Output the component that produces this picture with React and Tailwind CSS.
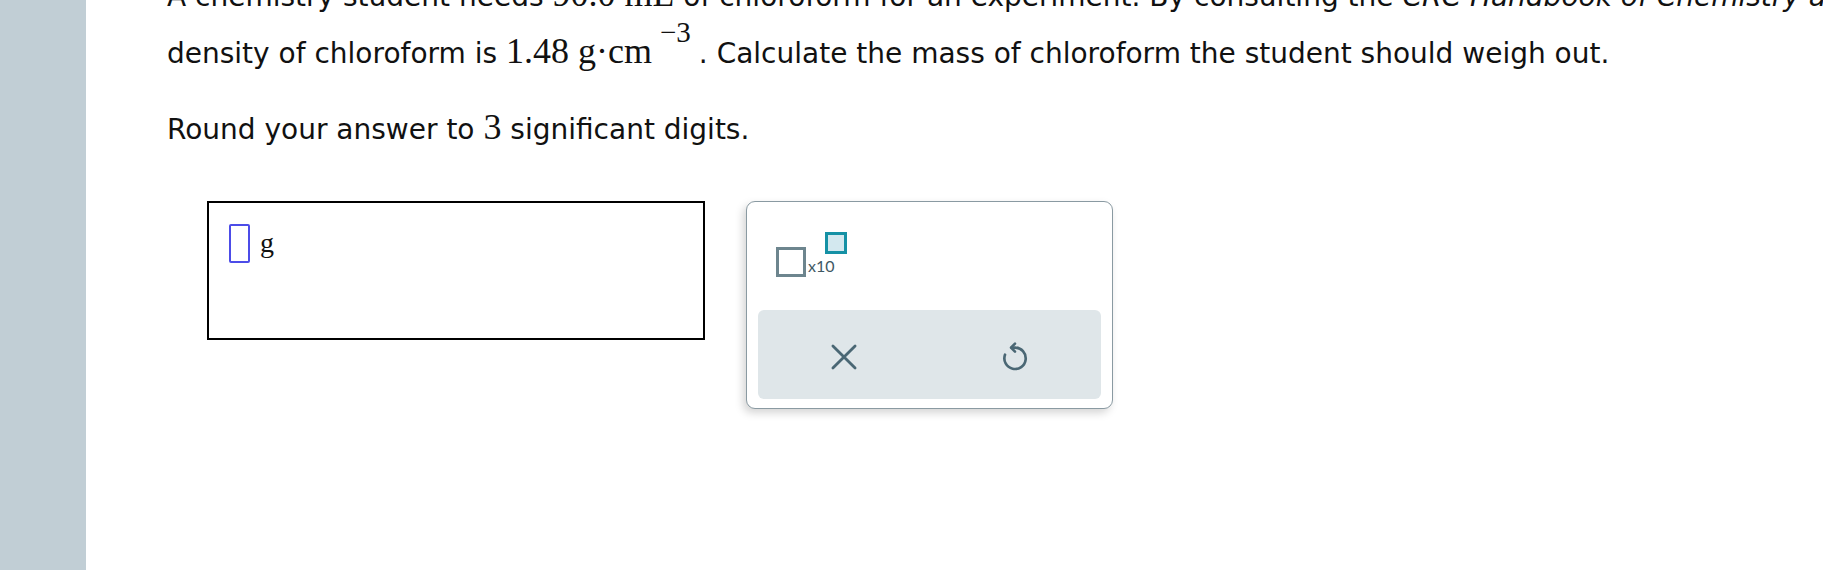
import React from "react";

const sans = { fontFamily: '"DejaVu Sans", Verdana, sans-serif' };
const serif = { fontFamily: '"Liberation Serif", "Times New Roman", serif' };

function Line({ children, className = "" }) {
  return (
    <div className={"h-[57px] leading-[57px] whitespace-nowrap " + className}>
      {children}
    </div>
  );
}

export default function App() {
  return (
    <div className="flex h-[570px] w-full overflow-hidden bg-white" style={sans}>
      <div className="w-[86px] shrink-0 bg-[#c1ced5]" />
      <div className="flex-1 min-w-0 overflow-hidden pl-[81px]">
        <div className="-mt-[32px] text-[28px] text-[#111]">
          <Line>
            A chemistry student needs <span className="text-[36px] leading-none" style={serif}>90.0 mL</span> of chloroform for an experiment. By consulting the <i>CRC Handbook of Chemistry and Physics</i>, the student discovers that the
          </Line>
          <Line>
            density of chloroform is{" "}
            <span className="text-[36px] leading-none" style={serif}>1.48 g·cm</span>
            <span className="relative -top-[21px] ml-[8px] mr-[8px] text-[29px] leading-none" style={serif}>−3</span>
            . Calculate the mass of chloroform the student should weigh out.
          </Line>
          <Line className="mt-[19px]">
            Round your answer to <span className="text-[36px] leading-none" style={serif}>3</span> significant digits.
          </Line>
        </div>

        <div className="mt-[43px] ml-[40px] flex items-start">
          <div className="w-[498px] h-[139px] border-2 border-black pl-[20px] pt-[21px]">
            <div className="flex items-end gap-[10px]">
              <div className="w-[21px] h-[39px] border-2 border-[#4c4ce8] rounded-[2px]" />
              <span className="text-[28px] leading-none mb-[6px] text-[#111]" style={serif}>g</span>
            </div>
          </div>

          <div className="ml-[41px] w-[367px] h-[208px] rounded-[9px] border-[1.5px] border-[#8a9aa2] bg-white shadow-[-3px_4px_8px_rgba(0,0,0,0.17)] flex flex-col">
            <div className="relative ml-[29px] mt-[30px] w-[76px] h-[48px]">
              <div className="absolute left-[49px] top-0 w-[22px] h-[22px] border-[3px] border-[#1591a5] bg-[#d3e8ef]" />
              <div className="absolute left-0 top-[15px] w-[30px] h-[30px] border-[3px] border-[#6d858e]" />
              <span
                className="absolute left-[32px] top-[26px] text-[16px] leading-none text-[#3e5863]"
                style={{ fontFamily: 'Lato, "Open Sans", sans-serif' }}
              >
                x10
              </span>
            </div>
            <div className="mt-auto mx-[11px] mb-[9px] h-[89px] rounded-[6px] bg-[#dfe6e9] flex">
              <div className="flex-1 flex items-center justify-center pt-[4px]">
                <svg width="28" height="28" viewBox="0 0 24 24" fill="none" stroke="#4a6774" strokeWidth="2.4" strokeLinecap="round">
                  <path d="M2.5 2.5 L21.5 21.5 M21.5 2.5 L2.5 21.5" />
                </svg>
              </div>
              <div className="flex-1 flex items-center justify-center pt-[4px]">
                <svg width="32" height="32" viewBox="0 0 24 24" fill="none" stroke="#4a6774" strokeWidth="2" strokeLinecap="round" strokeLinejoin="round">
                  <path d="M9.5 5 H12 A8 8 0 1 1 4.5 10.3" />
                  <path d="M12 2 L9 5 L12 8" />
                </svg>
              </div>
            </div>
          </div>
        </div>
      </div>
    </div>
  );
}
